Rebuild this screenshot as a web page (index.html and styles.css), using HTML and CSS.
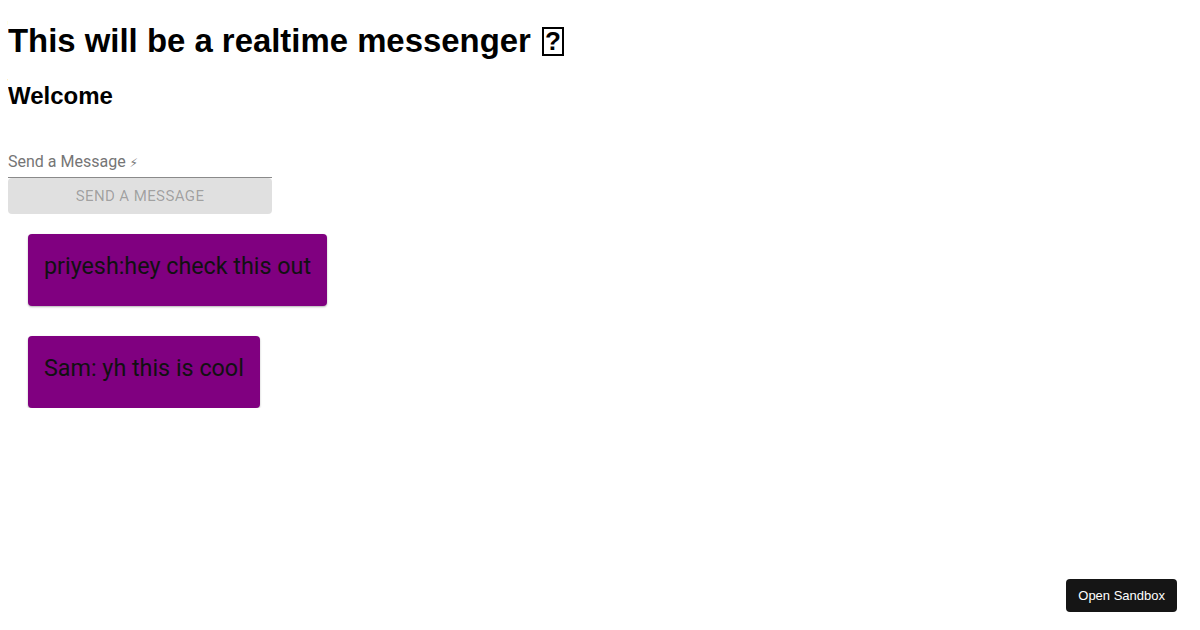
FILE: index.html
```html
<!DOCTYPE html>
<html lang="en">
<head>
    <meta charset="UTF-8">
    <meta name="viewport" content="width=device-width, initial-scale=1.0">
    <title>Messenger</title>
    <link rel="stylesheet" href="styles.css">
</head>
<body>

    <h1>This will be a realtime messenger <span class="missing-glyph">?</span></h1>
    <h2>Welcome</h2>

    <!-- Message form -->
    <form class="message-form">
        <div class="text-field">
            <label for="messageInput">Send a Message <span class="bolt">⚡</span></label>
            <input type="text" id="messageInput" name="message">
        </div>
        <button type="submit" class="send-button" disabled>Send a Message</button>
    </form>

    <!-- Messages -->
    <div class="messages">
        <div class="message">priyesh:hey check this out</div>
        <div class="message">Sam: yh this is cool</div>
    </div>

    <a class="sandbox-button" href="#">Open Sandbox</a>

</body>
</html>
```

FILE: styles.css
```css
body {
    font-family: "Liberation Sans", Arial, sans-serif;
    margin: 8px;
    color: #000;
}
h1 {
    font-size: 32.9px;
    margin: 14px 0 22px;
}
h2 {
    margin: 0;
}
.missing-glyph {
    display: inline-block;
    box-sizing: border-box;
    width: 22px;
    height: 29px;
    margin-left: 2px;
    border: 2px solid #000;
    font-size: 26px;
    line-height: 25px;
    text-align: center;
    vertical-align: 2px;
}
.message-form {
    margin-top: 42px;
    width: 264px;
}
.text-field {
    display: flex;
    flex-direction: column;
    border-bottom: 1px solid #8a8a8a;
}
.text-field label {
    font-family: Roboto, sans-serif;
    font-size: 16px;
    color: #757575;
    line-height: 20px;
}
.bolt {
    font-family: "DejaVu Sans", sans-serif;
    font-size: 12px;
}
.text-field input {
    border: none;
    outline: none;
    height: 4px;
    padding: 0;
    font-family: Roboto, sans-serif;
}
.send-button {
    display: block;
    width: 100%;
    height: 36px;
    border: none;
    border-radius: 4px;
    background: #e0e0e0;
    color: rgba(0, 0, 0, 0.3);
    font-family: Roboto, sans-serif;
    font-size: 15px;
    letter-spacing: 0.4px;
    text-transform: uppercase;
}
.messages {
    display: flex;
    flex-direction: column;
    align-items: flex-start;
    gap: 30px;
    margin: 20px 20px 0;
}
.message {
    background: #800080;
    color: #111;
    font-family: Roboto, sans-serif;
    font-size: 23.3px;
    line-height: 32px;
    padding: 16px 16px 24px;
    border-radius: 4px;
    box-shadow: 0 1px 2px rgba(0, 0, 0, 0.3);
}
.sandbox-button {
    position: fixed;
    right: 23px;
    bottom: 18px;
    background: #151515;
    color: #fff;
    font-size: 13px;
    text-decoration: none;
    padding: 9px 12px;
    border-radius: 4px;
}
```
